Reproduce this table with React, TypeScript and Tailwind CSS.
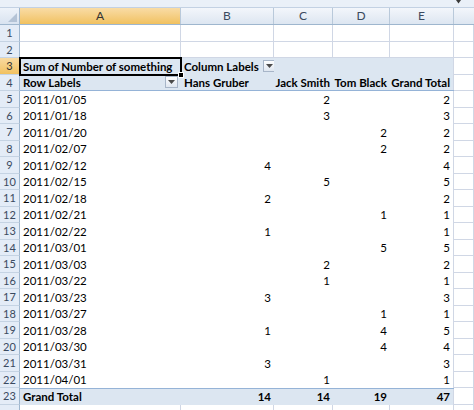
import React from "react";

const WIDTHS = [161, 93, 59, 57, 64];
const LETTERS = ["A", "B", "C", "D", "E"];

type Row = { date: string; b?: number; c?: number; d?: number; e: number };

const DATA: Row[] = [
  { date: "2011/01/05", c: 2, e: 2 },
  { date: "2011/01/18", c: 3, e: 3 },
  { date: "2011/01/20", d: 2, e: 2 },
  { date: "2011/02/07", d: 2, e: 2 },
  { date: "2011/02/12", b: 4, e: 4 },
  { date: "2011/02/15", c: 5, e: 5 },
  { date: "2011/02/18", b: 2, e: 2 },
  { date: "2011/02/21", d: 1, e: 1 },
  { date: "2011/02/22", b: 1, e: 1 },
  { date: "2011/03/01", d: 5, e: 5 },
  { date: "2011/03/03", c: 2, e: 2 },
  { date: "2011/03/22", c: 1, e: 1 },
  { date: "2011/03/23", b: 3, e: 3 },
  { date: "2011/03/27", d: 1, e: 1 },
  { date: "2011/03/28", b: 1, d: 4, e: 5 },
  { date: "2011/03/30", d: 4, e: 4 },
  { date: "2011/03/31", b: 3, e: 3 },
  { date: "2011/04/01", c: 1, e: 1 },
];

function DropButton() {
  return (
    <span className="flex h-[12px] w-[13px] shrink-0 items-center justify-center border border-[#a7b5c8] bg-gradient-to-b from-[#fdfeff] to-[#dfe6f0]">
      <svg width="7" height="4" viewBox="0 0 7 4">
        <path d="M0 0h7L3.5 4z" fill="#4a4a4a" />
      </svg>
    </span>
  );
}

function RowHead({ n, active }: { n?: number; active?: boolean }) {
  return (
    <div
      className={`flex h-full w-[20px] shrink-0 items-center justify-center border-b border-r border-b-[#c5d3e3] border-r-[#9eb6ce] text-[11px] ${
        active
          ? "bg-gradient-to-b from-[#f9d99f] to-[#f1c15f] text-[#333]"
          : "bg-[#e4ecf7] text-[#3b4a60]"
      }`}
    >
      {n}
    </div>
  );
}

function Plain({ w }: { w?: number }) {
  return (
    <div
      style={w ? { width: w } : undefined}
      className={`h-full border-b border-r border-[#d0d7e5] ${w ? "shrink-0" : "flex-1"}`}
    />
  );
}

function PlainRow({ n }: { n?: number }) {
  return (
    <div className="flex h-[16.5px]">
      <RowHead n={n} />
      {WIDTHS.map((w, i) => (
        <Plain key={i} w={w} />
      ))}
      <Plain />
    </div>
  );
}

function Num({ w, v, last }: { w: number; v?: number; last?: boolean }) {
  return (
    <div
      style={{ width: w }}
      className={`flex h-full shrink-0 items-center justify-end pr-[3px] ${
        last ? "border-r border-[#d0d7e5]" : ""
      }`}
    >
      {v ?? ""}
    </div>
  );
}

export default function App() {
  return (
    <div className="h-[410px] w-[474px] overflow-hidden bg-white font-['Lato','Liberation_Sans',sans-serif] text-[11.5px] leading-none text-black">
      <div className="relative h-[8px] border-b border-[#c3d1e3] bg-[#eaf0f8]">
        <svg className="absolute left-[456px] top-0" width="5" height="4" viewBox="0 0 5 4">
          <path d="M0 0h5L2.5 3.5z" fill="#3a3a3a" />
        </svg>
      </div>

      {/* column headers */}
      <div className="flex h-[17px] border-b border-[#9eb6ce]">
        <div className="relative w-[20px] shrink-0 border-r border-[#9eb6ce] bg-gradient-to-b from-[#eef3fa] to-[#d9e3f0]">
          <svg className="absolute bottom-[2px] right-[2px]" width="9" height="9" viewBox="0 0 9 9">
            <path d="M9 0v9H0z" fill="#b4c3d6" />
          </svg>
        </div>
        {WIDTHS.map((w, i) => (
          <div
            key={i}
            style={{ width: w }}
            className={`flex shrink-0 items-center justify-center border-r border-[#b9c9da] text-[12px] ${
              i === 0
                ? "bg-gradient-to-b from-[#f9dca5] to-[#f1c15f] text-[#333]"
                : "bg-gradient-to-b from-[#f3f6fb] to-[#dde6f1] text-[#3b4a60]"
            }`}
          >
            {LETTERS[i]}
          </div>
        ))}
        <div className="flex-1 bg-gradient-to-b from-[#f3f6fb] to-[#dde6f1]" />
      </div>

      <PlainRow n={1} />
      <PlainRow n={2} />

      {/* row 3 */}
      <div className="flex h-[16.5px]">
        <RowHead n={3} active />
        <div
          style={{ width: WIDTHS[0] }}
          className="relative flex h-full shrink-0 items-center whitespace-nowrap bg-[#dce6f1] pl-[3px] font-bold"
        >
          Sum of Number of something
          <div className="pointer-events-none absolute -inset-[1px] border-2 border-black" />
          <div className="absolute -bottom-[3px] -right-[3px] h-[6px] w-[6px] border border-white bg-black" />
        </div>
        <div
          style={{ width: WIDTHS[1] }}
          className="flex h-full shrink-0 items-center gap-[4px] bg-[#dce6f1] pl-[3px] font-bold"
        >
          <span className="whitespace-nowrap">Column Labels</span>
          <DropButton />
        </div>
        <div style={{ width: WIDTHS[2] }} className="h-full shrink-0 bg-[#dce6f1]" />
        <div style={{ width: WIDTHS[3] }} className="h-full shrink-0 bg-[#dce6f1]" />
        <div style={{ width: WIDTHS[4] }} className="h-full shrink-0 border-r border-[#d0d7e5] bg-[#dce6f1]" />
        <Plain />
      </div>

      {/* row 4 */}
      <div className="flex h-[16.5px]">
        <RowHead n={4} />
        <div className="flex h-full shrink-0 border-b border-[#95b3d7] bg-[#dce6f1] font-bold">
          <div
            style={{ width: WIDTHS[0] }}
            className="flex items-center justify-between pl-[3px] pr-[3px]"
          >
            Row Labels
            <DropButton />
          </div>
          {["Hans Gruber", "Jack Smith", "Tom Black", "Grand Total"].map((t, i) => (
            <div
              key={t}
              style={{ width: WIDTHS[i + 1] }}
              className={`flex items-center whitespace-nowrap ${
                i === 0 ? "pl-[3px]" : "justify-end pr-[3px]"
              } ${i === 3 ? "border-r border-[#d0d7e5]" : ""}`}
            >
              {t}
            </div>
          ))}
        </div>
        <Plain />
      </div>

      {DATA.map((r, idx) => (
        <div key={r.date} className="flex h-[16.5px]">
          <RowHead n={idx + 5} />
          <div style={{ width: WIDTHS[0] }} className="flex h-full shrink-0 items-center pl-[3px]">
            {r.date}
          </div>
          <Num w={WIDTHS[1]} v={r.b} />
          <Num w={WIDTHS[2]} v={r.c} />
          <Num w={WIDTHS[3]} v={r.d} />
          <Num w={WIDTHS[4]} v={r.e} last />
          <Plain />
        </div>
      ))}

      {/* grand total */}
      <div className="flex h-[16.5px]">
        <RowHead n={23} />
        <div className="flex h-full shrink-0 border-t border-[#95b3d7] bg-[#dce6f1] font-bold">
          <div style={{ width: WIDTHS[0] }} className="flex items-center pl-[3px]">
            Grand Total
          </div>
          {[14, 14, 19, 47].map((v, i) => (
            <div
              key={i}
              style={{ width: WIDTHS[i + 1] }}
              className={`flex items-center justify-end pr-[3px] ${
                i === 3 ? "border-r border-[#d0d7e5]" : ""
              }`}
            >
              {v}
            </div>
          ))}
        </div>
        <Plain />
      </div>

      <PlainRow />
    </div>
  );
}
